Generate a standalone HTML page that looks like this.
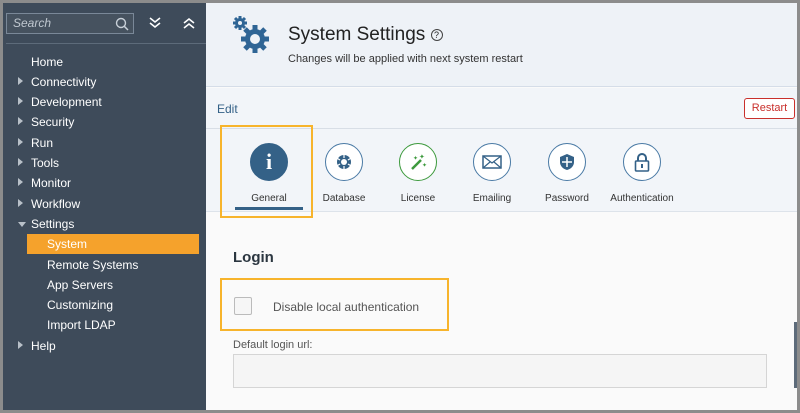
<!DOCTYPE html>
<html><head><meta charset="utf-8"><style>
*{margin:0;padding:0;box-sizing:border-box}
body{width:800px;height:413px;background:#8c8c8c;position:relative;overflow:hidden;font-family:"Liberation Sans",sans-serif}
.a{position:absolute}
#side{left:3px;top:3px;width:203px;height:407px;background:#3e4b5a}
.mi{position:absolute;left:28px;color:#fff;font-size:12px;line-height:14px}
.tri{position:absolute;left:15px;width:0;height:0;border-top:4px solid transparent;border-bottom:4px solid transparent;border-left:5px solid #b8c0c8}
#main{left:206px;top:3px;width:591px;height:407px;background:#fafafa}
.tab{position:absolute;top:140px;width:80px;text-align:center;font-size:10px;color:#333}
.circ{width:38px;height:38px;border-radius:50%;border:1.5px solid #4a7aa5;margin:0 auto 12px;display:flex;align-items:center;justify-content:center;background:#fff}
</style></head><body>
<div id="side" class="a">
 <div class="a" style="left:3px;top:10px;width:128px;height:21px;border:1px solid #7a8898;background:#46525f"></div>
 <div class="a" style="left:10px;top:13px;color:#c0c8d0;font-size:12px;font-style:italic">Search</div>
 <svg class="a" style="left:112px;top:14px" width="14" height="14"><circle cx="6" cy="6" r="4.5" fill="none" stroke="#c8d0d8" stroke-width="1.4"/><line x1="9.3" y1="9.3" x2="13" y2="13" stroke="#c8d0d8" stroke-width="1.5"/></svg>
 <svg class="a" style="left:145px;top:13px" width="14" height="14"><path d="M2 2l5 4 5-4M2 7l5 4 5-4" fill="none" stroke="#fff" stroke-width="1.6"/></svg>
 <svg class="a" style="left:179px;top:13px" width="14" height="14"><path d="M2 7l5-4 5 4M2 12l5-4 5 4" fill="none" stroke="#fff" stroke-width="1.6"/></svg>
 <div class="a" style="left:3px;top:40px;width:200px;height:1px;background:#5d6b7a"></div>
 <div class="mi" style="top:52px">Home</div>
 <div class="tri" style="top:74px"></div><div class="mi" style="top:72px">Connectivity</div>
 <div class="tri" style="top:94px"></div><div class="mi" style="top:92px">Development</div>
 <div class="tri" style="top:114px"></div><div class="mi" style="top:112px">Security</div>
 <div class="tri" style="top:135px"></div><div class="mi" style="top:133px">Run</div>
 <div class="tri" style="top:155px"></div><div class="mi" style="top:153px">Tools</div>
 <div class="tri" style="top:175px"></div><div class="mi" style="top:173px">Monitor</div>
 <div class="tri" style="top:196px"></div><div class="mi" style="top:194px">Workflow</div>
 <div class="a" style="left:15px;top:219px;border-left:4px solid transparent;border-right:4px solid transparent;border-top:5px solid #b8c0c8"></div><div class="mi" style="top:214px">Settings</div>
 <div class="a" style="left:24px;top:231px;width:172px;height:20px;background:#f5a22c"></div>
 <div class="mi" style="left:44px;top:234px">System</div>
 <div class="mi" style="left:44px;top:255px">Remote Systems</div>
 <div class="mi" style="left:44px;top:275px">App Servers</div>
 <div class="mi" style="left:44px;top:295px">Customizing</div>
 <div class="mi" style="left:44px;top:315px">Import LDAP</div>
 <div class="tri" style="top:338px"></div><div class="mi" style="top:336px">Help</div>
</div>
<div id="main" class="a">
 <div class="a" style="left:0;top:0;width:591px;height:84px;background:#eef2f7;border-bottom:1px solid #d5dde8"></div>
 <div class="a" style="left:0;top:85px;width:591px;height:124px;background:#f2f5f9;border-bottom:1px solid #dde3ea"></div>
 <div class="a" style="left:0;top:125px;width:591px;height:1px;background:#d8dee6"></div>
 <svg class="a" style="left:26px;top:12px" width="40" height="40"><g fill="#2f6595"><circle cx="8" cy="8" r="5"/><g stroke="#2f6595" stroke-width="3"><line x1="8" y1="1" x2="8" y2="15"/><line x1="1" y1="8" x2="15" y2="8"/><line x1="3" y1="3" x2="13" y2="13"/><line x1="13" y1="3" x2="3" y2="13"/></g><circle cx="8" cy="8" r="2" fill="#eef2f7"/><g stroke="#2f6595" stroke-width="5"><line x1="23" y1="10" x2="23" y2="38"/><line x1="9" y1="24" x2="37" y2="24"/><line x1="13" y1="14" x2="33" y2="34"/><line x1="33" y1="14" x2="13" y2="34"/></g><circle cx="23" cy="24" r="10"/><circle cx="23" cy="24" r="5" fill="#eef2f7"/></g></svg>
 <div class="a" style="left:82px;top:21px;font-size:19px;color:#222">System Settings <span style="display:inline-block;width:12px;height:12px;border:1.2px solid #444;border-radius:50%;font-size:9px;line-height:10px;text-align:center;vertical-align:2px">?</span></div>
 <div class="a" style="left:82px;top:50px;font-size:11px;color:#333">Changes will be applied with next system restart</div>
 <div class="a" style="left:11px;top:99px;font-size:12px;color:#346187">Edit</div>
 <div class="a" style="left:538px;top:95px;width:51px;height:21px;border:1px solid #c9302c;border-radius:3px;background:#fff;color:#c9302c;font-size:11px;text-align:center;line-height:19px">Restart</div>
 <div class="tab" style="left:23px"><div class="circ" style="background:#346187;border-color:#346187;color:#fff;font-family:'Liberation Serif',serif;font-weight:bold;font-size:22px">i</div>General</div>
 <div class="tab" style="left:98px"><div class="circ"><svg width="18" height="18"><g fill="#346187"><circle cx="9" cy="9" r="7"/></g><circle cx="9" cy="9" r="3" fill="#fff"/><path d="M9 2v3M9 13v3M2.5 5.5l2.6 1.5M12.9 11l2.6 1.5M2.5 12.5l2.6-1.5M12.9 7l2.6-1.5" stroke="#fff" stroke-width="1.2"/></svg></div>Database</div>
 <div class="tab" style="left:172px"><div class="circ" style="border-color:#3d9a3d"><svg width="20" height="20"><line x1="4" y1="17" x2="13" y2="8" stroke="#3d9a3d" stroke-width="2.5"/><text x="11" y="7" font-size="7" fill="#3d9a3d">✦</text><text x="14" y="15" font-size="6" fill="#3d9a3d">✦</text><text x="5" y="8" font-size="6" fill="#3d9a3d">✦</text></svg></div>License</div>
 <div class="tab" style="left:246px"><div class="circ"><svg width="20" height="16"><rect x="1" y="2" width="18" height="12" fill="none" stroke="#346187" stroke-width="1.5"/><path d="M1 2l9 7 9-7M1 14l7-6M19 14l-7-6" fill="none" stroke="#346187" stroke-width="1.2"/></svg></div>Emailing</div>
 <div class="tab" style="left:321px"><div class="circ"><svg width="16" height="18"><path d="M8 1l7 3v5c0 4-3 7-7 8-4-1-7-4-7-8V4z" fill="#346187"/><path d="M8 4v10M3 9h10" stroke="#fff" stroke-width="1.5"/></svg></div>Password</div>
 <div class="tab" style="left:396px"><div class="circ"><svg width="16" height="20"><path d="M4 9V6a4 4 0 018 0v3" fill="none" stroke="#346187" stroke-width="2"/><rect x="1.5" y="9" width="13" height="10" rx="1" fill="none" stroke="#346187" stroke-width="1.6"/><rect x="7" y="12" width="2" height="4" fill="#346187"/></svg></div>Authentication</div>
 <div class="a" style="left:29px;top:204px;width:68px;height:3px;background:#346187"></div>
 <div class="a" style="left:14px;top:122px;width:93px;height:93px;border:2px solid #f7b42c"></div>
 <div class="a" style="left:27px;top:246px;font-size:15px;font-weight:bold;color:#2b3640">Login</div>
 <div class="a" style="left:14px;top:275px;width:229px;height:53px;border:2px solid #f7b42c"></div>
 <div class="a" style="left:28px;top:294px;width:18px;height:18px;border:1px solid #bbb;border-radius:2px;background:#f6f6f6"></div>
 <div class="a" style="left:67px;top:297px;font-size:12px;color:#555">Disable local authentication</div>
 <div class="a" style="left:27px;top:336px;font-size:11px;color:#555">Default login url:</div>
 <div class="a" style="left:27px;top:351px;width:534px;height:34px;border:1px solid #d5d5d5;background:#f5f5f5"></div>
 <div class="a" style="left:588px;top:319px;width:3px;height:66px;background:#5d6b7a"></div>
</div>
</body></html>
